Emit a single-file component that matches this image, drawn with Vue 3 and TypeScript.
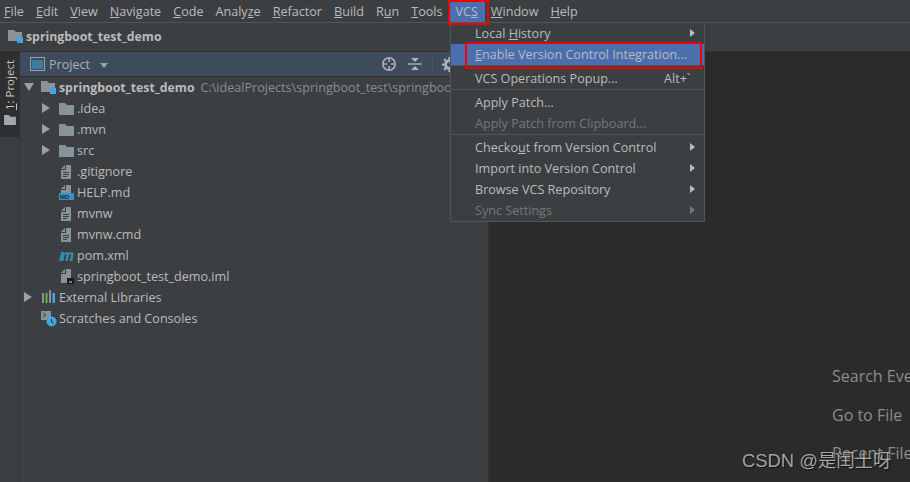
<template>
  <div class="ide">
    <div class="menubar">
      <span v-for="m in menus" :key="m.label" class="menu" :class="{ active: m.label === 'VCS' }">{{ m.label.slice(0, m.u) }}<u>{{ m.label.charAt(m.u) }}</u>{{ m.label.slice(m.u + 1) }}</span>
    </div>

    <div class="navbar">
      <svg class="ico" width="16" height="16" viewBox="0 0 16 16">
        <path d="M0 2h6l2 2h6v9H0z" fill="#8a9299" />
        <rect x="9" y="9" width="6" height="6" fill="#3aa9e0" />
      </svg>
      <b>springboot_test_demo</b>
    </div>

    <div class="main">
      <div class="stripe">
        <div class="stripe-tab">
          <span class="stripe-label"><u>1</u>: Project</span>
          <svg width="12" height="10" viewBox="0 0 13 11"><path d="M0 0h5l2 2h6v9H0z" fill="#a5a8aa" /></svg>
        </div>
      </div>

      <div class="panel">
        <div class="panel-head">
          <svg class="view-ico" width="16" height="14" viewBox="0 0 16 14">
            <rect x="0.5" y="0.5" width="14" height="13" fill="none" stroke="#9aa1a7" />
            <rect x="2" y="3" width="11" height="9" fill="#3d7a9c" />
          </svg>
          <span class="head-title">Project</span>
          <i class="caret"></i>
          <div class="head-tools">
            <svg width="16" height="16" viewBox="0 0 16 16">
              <circle cx="8" cy="8" r="6.200" fill="none" stroke="#afb1b3" stroke-width="1.600" />
              <path d="M8 2v4M8 10v4M2 8h4M10 8h4" stroke="#afb1b3" stroke-width="1.600" />
            </svg>
            <svg width="16" height="16" viewBox="0 0 16 16">
              <path d="M1 8h14" stroke="#afb1b3" stroke-width="1.400" />
              <path d="M4 2h8L8 6zM4 14h8L8 10z" fill="#afb1b3" />
            </svg>
            <span class="tool-sep"></span>
            <svg width="15" height="15" viewBox="0 0 16 16">
              <circle cx="8" cy="8" r="4.200" fill="none" stroke="#afb1b3" stroke-width="3" />
              <path d="M8 0v3M8 13v3M0 8h3M13 8h3M2.300 2.300l2 2M11.700 11.700l2 2M13.700 2.300l-2 2M4.300 11.700l-2 2" stroke="#afb1b3" stroke-width="2.400" />
            </svg>
          </div>
        </div>

        <div class="tree">
          <div class="row root">
            <i class="arrow down"></i>
            <svg class="ico" width="16" height="16" viewBox="0 0 16 16">
              <path d="M0 2h6l2 2h6v9H0z" fill="#8a9299" />
              <rect x="9" y="9" width="6" height="6" fill="#3aa9e0" />
            </svg>
            <b>springboot_test_demo</b>
            <span class="path">C:\idealProjects\springboot_test\springboot_test_demo</span>
          </div>

          <div v-for="n in folders" :key="n" class="row depth1">
            <i class="arrow"></i>
            <svg class="ico" width="15" height="13" viewBox="0 0 15 13"><path d="M0 1h6l2 2h7v10H0z" fill="#87939a" /></svg>
            <span>{{ n }}</span>
          </div>

          <div v-for="f in files" :key="f.name" class="row depth2">
            <svg v-if="f.kind === 'text'" class="ico" width="15" height="15" viewBox="0 0 15 15">
              <path d="M2 5 6 1v4z" fill="#87939a" />
              <path d="M7 1h5v14H2V6h5z" fill="#87939a" />
              <path d="M4 8.500h6M4 10.500h6M4 12.500h4" stroke="#3c3f41" />
            </svg>
            <svg v-else-if="f.kind === 'md'" class="ico" width="15" height="15" viewBox="0 0 15 15">
              <path d="M2 4 6 0v4z" fill="#87939a" />
              <path d="M7 0h5v8H2V5h5z" fill="#87939a" />
              <rect y="8" width="15" height="7" fill="#3592c4" />
              <text x="1" y="14" class="md-text">MD</text>
            </svg>
            <svg v-else-if="f.kind === 'pom'" class="ico" width="15" height="15" viewBox="0 0 15 15">
              <path d="M0 13 2 4h3l.3 1.200Q6.500 4 8 4q1.400 0 1.800 1.200Q11 4 12.500 4q2.500 0 2 2.500L13.300 13h-2.600l1.100-5.500q.2-1.200-.7-1.200t-1.200 1.200L8.800 13H6.300l1.100-5.500q.2-1.200-.7-1.200t-1.200 1.200L4.400 13z" fill="#3a87a8" />
            </svg>
            <svg v-else class="ico" width="15" height="16" viewBox="0 0 15 16">
              <path d="M2 5 6 1v4z" fill="#87939a" />
              <path d="M7 1h5v14H2V6h5z" fill="#87939a" />
              <rect x="8" y="10" width="7" height="6" fill="#1c1c1c" />
              <path d="M10 14h3" stroke="#ddd" />
            </svg>
            <span>{{ f.name }}</span>
          </div>

          <div class="row top">
            <i class="arrow"></i>
            <svg class="ico" width="16" height="14" viewBox="0 0 16 14">
              <rect x="1" y="3" width="2" height="10" fill="#87939a" />
              <rect x="4.500" y="3" width="2" height="10" fill="#62b543" />
              <rect x="8" y="0" width="2" height="13" fill="#87939a" />
              <rect x="11.500" y="3" width="2.500" height="10" fill="#40a8e0" />
            </svg>
            <span>External Libraries</span>
          </div>

          <div class="row top">
            <i class="arrow none"></i>
            <svg class="ico" width="16" height="17" viewBox="0 0 16 17">
              <rect x="0" y="1" width="10" height="9" fill="#87939a" />
              <path d="M2 3l3 2-3 2" fill="none" stroke="#3c3f41" />
              <circle cx="10.500" cy="11.500" r="5" fill="#40a8e0" />
              <path d="M10.500 9v3l2 1" fill="none" stroke="#2b2b2b" />
            </svg>
            <span>Scratches and Consoles</span>
          </div>
        </div>
      </div>

      <div class="editor">
        <div class="hints">
          <div>Search Everywhere</div>
          <div>Go to File</div>
          <div>Recent Files</div>
        </div>
      </div>
    </div>

    <div class="popup">
      <template v-for="(it, i) in items" :key="i">
        <div v-if="it.sep" class="sep"></div>
        <div v-else class="item" :class="{ hl: it.hl, off: it.off }">
          <span>{{ it.label!.slice(0, it.u ?? 0) }}<u v-if="it.u !== undefined">{{ it.label!.charAt(it.u) }}</u>{{ it.u !== undefined ? it.label!.slice(it.u + 1) : it.label }}</span>
          <span v-if="it.key" class="key">{{ it.key }}</span>
          <i v-if="it.sub" class="sub"></i>
        </div>
      </template>
    </div>

    <div class="redbox vcs-box"></div>
    <div class="redbox enable-box"></div>
    <div class="mark">CSDN @是闰土呀</div>
  </div>
</template>

<script setup lang="ts">
type Item = { label?: string; u?: number; sub?: boolean; key?: string; hl?: boolean; off?: boolean; sep?: boolean };

const menus = [
  { label: "File", u: 0 },
  { label: "Edit", u: 0 },
  { label: "View", u: 0 },
  { label: "Navigate", u: 0 },
  { label: "Code", u: 0 },
  { label: "Analyze", u: 5 },
  { label: "Refactor", u: 0 },
  { label: "Build", u: 0 },
  { label: "Run", u: 1 },
  { label: "Tools", u: 0 },
  { label: "VCS", u: 2 },
  { label: "Window", u: 0 },
  { label: "Help", u: 0 },
];

const folders = [".idea", ".mvn", "src"];

const files = [
  { name: ".gitignore", kind: "text" },
  { name: "HELP.md", kind: "md" },
  { name: "mvnw", kind: "text" },
  { name: "mvnw.cmd", kind: "text" },
  { name: "pom.xml", kind: "pom" },
  { name: "springboot_test_demo.iml", kind: "iml" },
];

const items: Item[] = [
  { label: "Local History", u: 6, sub: true },
  { label: "Enable Version Control Integration...", u: 0, hl: true },
  { sep: true },
  { label: "VCS Operations Popup...", key: "Alt+`" },
  { sep: true },
  { label: "Apply Patch..." },
  { label: "Apply Patch from Clipboard...", off: true },
  { sep: true },
  { label: "Checkout from Version Control", u: 6, sub: true },
  { label: "Import into Version Control", sub: true },
  { label: "Browse VCS Repository", sub: true },
  { label: "Sync Settings", sub: true, off: true },
];
</script>

<style scoped>
.ide {
  position: relative;
  width: 910px;
  height: 482px;
  overflow: hidden;
  display: flex;
  flex-direction: column;
  background: #3c3f41;
  color: #bbbbbb;
  font-family: "Open Sans", "Noto Sans", sans-serif;
  font-size: 12.6px;
}

.menubar {
  height: 22px;
  flex-shrink: 0;
  display: flex;
  align-items: center;
  padding-left: 0;
  border-bottom: 1px solid #515658;
}

.menu {
  padding: 0 6px;
  height: 22px;
  line-height: 24px;
  white-space: pre;
}

.menu:first-child {
  margin-left: -2px;
}

.menu.active {
  background: #4b6eaf;
  padding: 0 7px;
}

.navbar {
  height: 28px;
  flex-shrink: 0;
  display: flex;
  align-items: center;
  gap: 2px;
  padding-left: 8px;
  padding-bottom: 2px;
  box-sizing: border-box;
}

.navbar b,
.root b {
  font-weight: 700;
  font-size: 12.3px;
}

.main {
  flex: 1;
  min-height: 0;
  display: flex;
  border-top: 1px solid #323232;
}

.stripe {
  width: 20px;
  box-sizing: border-box;
  flex-shrink: 0;
  border-right: 1px solid #323232;
}

.stripe-tab {
  height: 85px;
  background: #2d2f30;
  display: flex;
  flex-direction: column;
  align-items: center;
  padding-top: 8px;
  box-sizing: border-box;
  gap: 5px;
}

.stripe-label {
  writing-mode: vertical-rl;
  transform: rotate(180deg);
  font-size: 11.5px;
  line-height: 18px;
  color: #c4c4c4;
}

.panel {
  width: 469px;
  box-sizing: border-box;
  flex-shrink: 0;
  display: flex;
  flex-direction: column;
  border-right: 1px solid #323232;
  overflow: hidden;
}

.panel-head {
  height: 24px;
  flex-shrink: 0;
  display: flex;
  align-items: center;
  background: #3d4b5c;
  padding-left: 10px;
  border-bottom: 1px solid #323232;
}

.head-title {
  margin-left: 3px;
  color: #a9b0b6;
}

.caret {
  margin-left: 10px;
  border-left: 4px solid transparent;
  border-right: 4px solid transparent;
  border-top: 5px solid #9aa1a7;
  margin-top: 2px;
}

.head-tools {
  margin-left: auto;
  display: flex;
  align-items: center;
  gap: 10px;
  padding-right: 31px;
}

.tool-sep {
  width: 1px;
  height: 20px;
  background: #4a5562;
  margin: 0 -1px;
}

.row {
  height: 21px;
  padding-bottom: 1px;
  box-sizing: border-box;
  display: flex;
  align-items: center;
  white-space: nowrap;
  padding-left: 4px;
}

.row .ico {
  flex-shrink: 0;
  margin-right: 2px;
}

.row.depth1 {
  padding-left: 22px;
}

.depth1 .ico {
  margin-right: 3px;
}

.row.depth2 {
  padding-left: 39px;
}

.depth2 .ico {
  margin-right: 3px;
}

.arrow {
  display: inline-block;
  width: 0;
  height: 0;
  border-top: 5px solid transparent;
  border-bottom: 5px solid transparent;
  border-left: 8px solid #9da0a2;
  margin-right: 9px;
}

.arrow.down {
  border-left: 5px solid transparent;
  border-right: 5px solid transparent;
  border-top: 8px solid #9da0a2;
  border-bottom: 0;
  margin-right: 7px;
}

.arrow.none {
  border-color: transparent;
}

.path {
  color: #8a8d8f;
  margin-left: 6px;
}

.md-text {
  font: 700 6px "Liberation Sans", sans-serif;
  fill: #2b2b2b;
}

.editor {
  flex: 1;
  background: #2b2b2b;
  overflow: hidden;
  position: relative;
  min-width: 0;
}

.hints {
  position: absolute;
  left: 343px;
  top: 313px;
  font-size: 16px;
  color: #8d8d8d;
  white-space: nowrap;
  display: flex;
  flex-direction: column;
  gap: 16.5px;
  line-height: 22px;
}

.popup {
  position: absolute;
  left: 450px;
  top: 22px;
  width: 255px;
  box-sizing: border-box;
  background: #3c3f41;
  border: 1px solid #515658;
}

.item {
  height: 21px;
  box-sizing: border-box;
  padding-bottom: 1px;
  display: flex;
  align-items: center;
  padding-left: 24px;
  padding-right: 9px;
  white-space: pre;
  position: relative;
}

.item.hl {
  background: #4b6eaf;
}

.item.off {
  color: #777777;
}

.key {
  position: absolute;
  left: 213px;
}

.sub {
  margin-left: auto;
  border-top: 4px solid transparent;
  border-bottom: 4px solid transparent;
  border-left: 5px solid #bbbbbb;
}

.off .sub {
  border-left-color: #777777;
}

.sep {
  height: 1px;
  margin: 0 0 2px;
  background: #515658;
}

.redbox {
  position: absolute;
  border: 2px solid #f00000;
  box-sizing: border-box;
  pointer-events: none;
}

.vcs-box {
  left: 448px;
  top: 0;
  width: 41px;
  height: 25px;
}

.enable-box {
  left: 465px;
  top: 42px;
  width: 237px;
  height: 27px;
}

.mark {
  position: absolute;
  left: 742px;
  top: 449px;
  font-family: "Liberation Sans", "Noto Sans CJK SC", sans-serif;
  font-size: 18.4px;
  line-height: 24px;
  color: rgba(190, 190, 190, 0.85);
  text-shadow: 1px 1px 1px rgba(0, 0, 0, 0.6);
  white-space: nowrap;
}
</style>
